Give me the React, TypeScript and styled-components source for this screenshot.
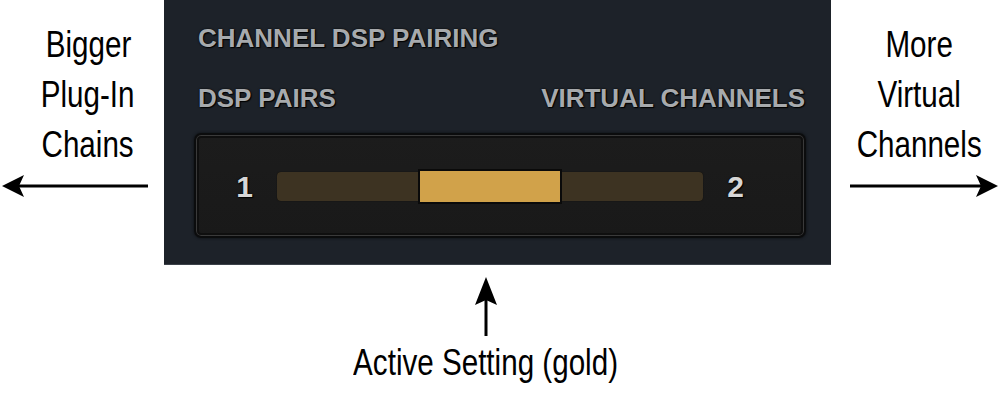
import React from 'react'
import styled, { createGlobalStyle } from 'styled-components'

const Global = createGlobalStyle`
  body {
    margin: 0;
    background: #ffffff;
    font-family: "Liberation Sans", Arial, sans-serif;
  }
`

const Page = styled.div`
  width: 1000px;
  height: 407px;
  overflow: hidden;
  display: flex;
  flex-direction: column;
`

const Top = styled.div`
  display: flex;
  height: 265px;
`

const Side = styled.div<{ $w: number }>`
  width: ${p => p.$w}px;
  flex: 0 0 auto;
  padding-top: 20px;
  display: flex;
  flex-direction: column;
`

const NoteBlock = styled.div<{ $pl: number }>`
  padding-left: ${p => p.$pl}px;
  display: flex;
  flex-direction: column;
  align-items: center;
`

const Note = styled.span`
  display: block;
  font-size: 37px;
  line-height: 50px;
  color: #000;
  white-space: nowrap;
  transform: scaleX(0.8);
  text-align: center;
`

const ArrowBox = styled.div<{ $ml: number }>`
  margin-left: ${p => p.$ml}px;
  margin-top: 4px;
  height: 24px;
  display: flex;
`

const Panel = styled.div`
  width: 667px;
  flex: 0 0 auto;
  box-sizing: border-box;
  background: #1d2229;
  border-bottom: 1px solid #3b4149;
  padding: 26px 25px 0 30px;
  display: flex;
  flex-direction: column;
`

const Caps = styled.div`
  font-weight: bold;
  font-size: 26px;
  line-height: 24px;
  color: #a7aaad;
  text-shadow: 0 0 2px #000, 1px 1px 1px #000;
  white-space: nowrap;
`

const Title = styled(Caps)`
  padding-left: 4px;
`

const LabelRow = styled.div`
  display: flex;
  justify-content: space-between;
  padding: 0 1px 0 4px;
  margin-top: 36px;
`

const Frame = styled.div`
  margin-top: 23px;
  height: 105px;
  box-sizing: border-box;
  border-radius: 7px;
  border: 2px solid #0b0c0d;
  box-shadow: inset 0 0 0 1px #3a3a3a, inset 0 0 0 3px #0f0f0f, 0 0 3px #0a0c0f;
  background: linear-gradient(180deg, #1c1c1c 0%, #191919 100%);
  display: flex;
  align-items: center;
  padding: 2px 0 0 40px;
`

const Num = styled.div`
  font-weight: bold;
  font-size: 30px;
  color: #d6d6d6;
  text-shadow: 0 0 2px #000, 1px 1px 1px #000;
  width: 17px;
  text-align: center;
`

const Track = styled.div`
  margin: 0 24px 0 24px;
  width: 426px;
  height: 29px;
  border-radius: 4px;
  background: #3d3322;
  box-shadow: 0 0 1px #000;
  display: flex;
`

const Segment = styled.div<{ $active?: boolean }>`
  flex: 1;
  box-sizing: border-box;
  ${p =>
    p.$active
      ? `
    margin: -3px 0;
    border: 2px solid #0a0a0a;
    background: #d1a24a;
  `
      : ''}
`

const Bottom = styled.div`
  display: flex;
  flex-direction: column;
  align-items: center;
  padding-right: 28px;
  padding-top: 12px;
`

const Caption = styled(Note)`
  margin-top: 1px;
`

const LeftArrow = () => (
  <svg width="150" height="24" viewBox="0 0 150 24">
    <line x1="16" y1="12" x2="148" y2="12" stroke="#000" strokeWidth="3" />
    <path d="M2 12 L24 1 L19 12 L24 23 Z" fill="#000" />
  </svg>
)

const RightArrow = () => (
  <svg width="150" height="24" viewBox="0 0 150 24">
    <line x1="0" y1="12" x2="134" y2="12" stroke="#000" strokeWidth="3" />
    <path d="M148 12 L126 1 L131 12 L126 23 Z" fill="#000" />
  </svg>
)

const UpArrow = () => (
  <svg width="24" height="60" viewBox="0 0 24 60">
    <line x1="12" y1="14" x2="12" y2="59" stroke="#000" strokeWidth="3" />
    <path d="M12 0 L1 28 L12 23 L23 28 Z" fill="#000" />
  </svg>
)

export default function App() {
  return (
    <Page>
      <Global />
      <Top>
        <Side $w={164}>
          <NoteBlock $pl={12}>
            <Note>Bigger</Note>
            <Note>Plug-In</Note>
            <Note>Chains</Note>
          </NoteBlock>
          <ArrowBox $ml={0}>
            <LeftArrow />
          </ArrowBox>
        </Side>
        <Panel>
          <Title>CHANNEL DSP PAIRING</Title>
          <LabelRow>
            <Caps>DSP PAIRS</Caps>
            <Caps>VIRTUAL CHANNELS</Caps>
          </LabelRow>
          <Frame>
            <Num>1</Num>
            <Track>
              <Segment />
              <Segment $active />
              <Segment />
            </Track>
            <Num>2</Num>
          </Frame>
        </Panel>
        <Side $w={169}>
          <NoteBlock $pl={8}>
            <Note>More</Note>
            <Note>Virtual</Note>
            <Note>Channels</Note>
          </NoteBlock>
          <ArrowBox $ml={19}>
            <RightArrow />
          </ArrowBox>
        </Side>
      </Top>
      <Bottom>
        <UpArrow />
        <Caption>Active Setting (gold)</Caption>
      </Bottom>
    </Page>
  )
}
